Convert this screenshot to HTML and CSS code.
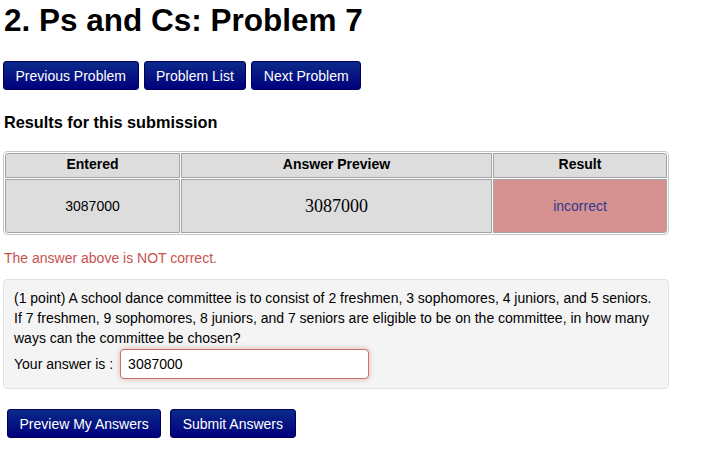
FILE: index.html
```html
<!DOCTYPE html>
<html>
<head>
<meta charset="utf-8">
<link rel="stylesheet" href="styles.css">
</head>
<body>
<div class="page">
  <h2 class="title">2. Ps and Cs: Problem 7</h2>
  <div class="nav">
    <span class="btn">Previous Problem</span>
    <span class="btn">Problem List</span>
    <span class="btn">Next Problem</span>
  </div>
  <h3 class="results-title">Results for this submission</h3>
  <table class="results">
    <tr class="head">
      <th class="c1">Entered</th>
      <th class="c2">Answer Preview</th>
      <th class="c3">Result</th>
    </tr>
    <tr class="body">
      <td class="entered">3087000</td>
      <td class="preview">3087000</td>
      <td class="incorrect">incorrect</td>
    </tr>
  </table>
  <p class="msg">The answer above is NOT correct.</p>
  <div class="problem">
    <p class="text">(1 point) A school dance committee is to consist of 2 freshmen, 3 sophomores, 4 juniors, and 5 seniors. If 7 freshmen, 9 sophomores, 8 juniors, and 7 seniors are eligible to be on the committee, in how many ways can the committee be chosen?</p>
    <div class="answer-row">
      <span class="label">Your answer is :</span>
      <span class="input">3087000</span>
    </div>
  </div>
  <div class="submit">
    <span class="btn btn-lg">Preview My Answers</span>
    <span class="btn btn-lg">Submit Answers</span>
  </div>
</div>
</body>
</html>
```

FILE: styles.css
```css
html, body {
  margin: 0;
  padding: 0;
  background: #fff;
}
body {
  font-family: "Liberation Sans", Arial, sans-serif;
  font-size: 14px;
  line-height: 20px;
  color: #000;
}
.page {
  padding-left: 3px;
  width: 666px;
}
.title {
  margin: 0 0 0 1px;
  font-size: 31.5px;
  line-height: 40px;
  font-weight: bold;
}
.nav {
  margin-top: 21px;
  display: flex;
  gap: 5px;
}
.btn {
  display: inline-block;
  box-sizing: border-box;
  height: 29px;
  padding: 4px 11.5px 0;
  line-height: 20px;
  font-size: 14px;
  color: #fff;
  background: linear-gradient(#0b2a8a, #00007c);
  border: 1px solid #00005a;
  border-radius: 3px;
  white-space: nowrap;
}
.results-title {
  margin: 20px 0 0 1px;
  font-size: 16.3px;
  line-height: 24px;
  font-weight: bold;
}
.results {
  margin-top: 17px;
  width: 666px;
  border-collapse: separate;
  border-spacing: 1px;
  border: 1px solid #c8c8c8;
  border-radius: 4px;
}
.results th, .results td {
  background: #dddddd;
  border: 1px solid #a3a3a3;
  text-align: center;
  padding: 0;
}
.results th {
  height: 20px;
  padding-bottom: 3px;
  vertical-align: top;
  font-size: 14px;
  font-weight: bold;
}
.results td {
  height: 52px;
}
.results .c1 { width: 173px; border-top-left-radius: 3px; }
.results .c2 { width: 309px; }
.results .c3 { border-top-right-radius: 3px; }
.results .entered { border-bottom-left-radius: 3px; }
.results .preview {
  font-family: "Liberation Serif", "Times New Roman", serif;
  font-size: 18px;
}
.results .incorrect {
  background: #d69191;
  color: #2b3a8c;
  border-bottom-right-radius: 3px;
}
.msg {
  margin: 13px 0 0 1px;
  color: #c8524f;
  line-height: 20px;
}
.problem {
  margin-top: 11px;
  background: #f4f4f4;
  border: 1px solid #e2e2e2;
  border-radius: 4px;
  padding: 8px 10px 9px 10px;
}
.text {
  margin: 0;
  line-height: 20px;
}
.answer-row {
  display: flex;
  align-items: center;
  margin-top: 1px;
}
.label {
  margin-right: 7px;
}
.input {
  box-sizing: border-box;
  width: 249px;
  height: 30px;
  padding: 4px 7px 0;
  background: #fff;
  border: 1px solid #c97272;
  border-radius: 4px;
  box-shadow: 0 0 5px rgba(200, 80, 80, 0.45);
}
.submit {
  margin: 20px 0 0 4px;
  display: flex;
  gap: 9px;
}
```
